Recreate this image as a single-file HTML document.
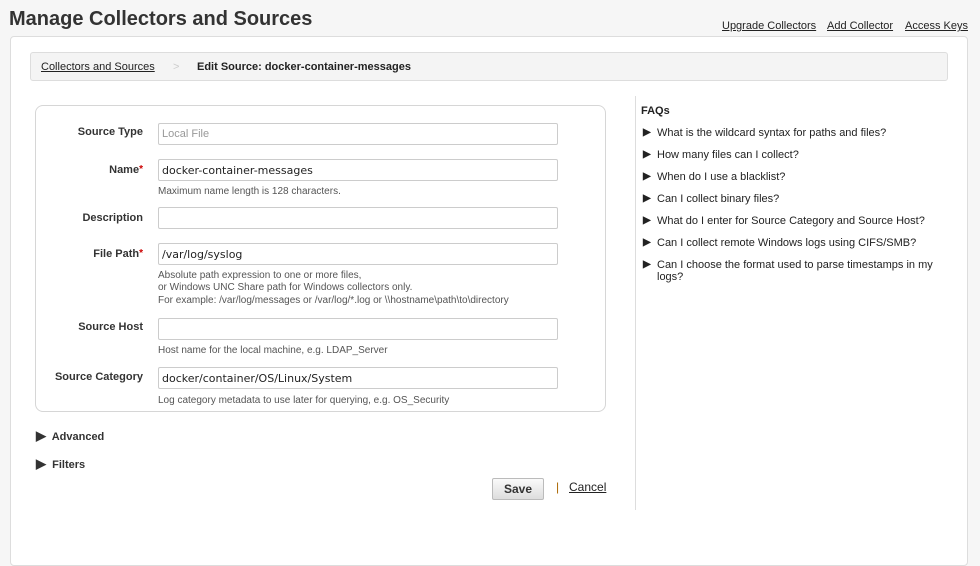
<!DOCTYPE html>
<html><head><style>
*{margin:0;padding:0;box-sizing:border-box}
body{width:980px;height:551px;background:#f6f6f6;font-family:"Liberation Sans",sans-serif;color:#222;position:relative;overflow:hidden}
.a{position:absolute}
h1{position:absolute;left:9px;top:8px;font-size:20px;font-weight:bold;color:#333}
.top a{color:#222;font-size:11px;text-decoration:underline}
.panel{left:10px;top:36px;width:958px;height:530px;background:#fff;border:1px solid #ddd;border-radius:4px}
.bc{left:30px;top:52px;width:918px;height:29px;background:#f4f4f4;border:1px solid #ddd;border-radius:3px;font-size:11px}
.form{left:35px;top:105px;width:571px;height:307px;border:1px solid #d6d6d6;border-radius:8px}
.lab{font-size:11px;font-weight:bold;color:#333;text-align:right;width:108px;left:35px}
.lab i{color:#c00;font-style:normal;font-size:10px;vertical-align:top}
.in{left:158px;width:400px;height:22px;border:1px solid #ccc;border-radius:2px;background:#fff;font-family:"DejaVu Sans",sans-serif;font-size:11px;padding:4px 3px;line-height:13px}
.h{left:158px;font-size:10px;color:#555;line-height:11.5px}
.faq{left:657px;font-size:11px;color:#222;width:290px;line-height:12px}
.faq b{position:absolute;left:-14px;top:0;font-size:10px}
</style></head><body>
<h1>Manage Collectors and Sources</h1>
<div class="a top" style="left:722px;top:16px"><a>Upgrade Collectors</a></div>
<div class="a top" style="left:827px;top:16px"><a>Add Collector</a></div>
<div class="a top" style="left:905px;top:16px"><a>Access Keys</a></div>
<div class="a panel"></div>
<div class="a bc"><span class="a" style="left:10px;top:8px;text-decoration:underline;color:#222">Collectors and Sources</span><span class="a" style="left:142px;top:8px;color:#ccc">&gt;</span><span class="a" style="left:166px;top:8px;font-weight:bold">Edit Source: docker-container-messages</span></div>
<div class="a form"></div>
<div class="a lab" style="top:126px">Source Type</div>
<div class="a in" style="top:123px;color:#999;font-family:'Liberation Sans',sans-serif">Local File</div>
<div class="a lab" style="top:164px">Name<i>*</i></div>
<div class="a in" style="top:159px">docker-container-messages</div>
<div class="a h" style="top:186px">Maximum name length is 128 characters.</div>
<div class="a lab" style="top:212px">Description</div>
<div class="a in" style="top:207px">&nbsp;</div>
<div class="a lab" style="top:248px">File Path<i>*</i></div>
<div class="a in" style="top:243px">/var/log/syslog</div>
<div class="a h" style="top:270px">Absolute path expression to one or more files,<br>or Windows UNC Share path for Windows collectors only.</div>
<div class="a h" style="top:295px">For example: /var/log/messages or /var/log/*.log or \\hostname\path\to\directory</div>
<div class="a lab" style="top:321px">Source Host</div>
<div class="a in" style="top:318px">&nbsp;</div>
<div class="a h" style="top:345px">Host name for the local machine, e.g. LDAP_Server</div>
<div class="a lab" style="top:371px">Source Category</div>
<div class="a in" style="top:367px">docker/container/OS/Linux/System</div>
<div class="a h" style="top:395px">Log category metadata to use later for querying, e.g. OS_Security</div>
<div class="a" style="left:36px;top:428px;font-size:11px;font-weight:bold;color:#333"><span style="font-size:13px">&#9654;</span>&nbsp; Advanced</div>
<div class="a" style="left:36px;top:456px;font-size:11px;font-weight:bold;color:#333"><span style="font-size:13px">&#9654;</span>&nbsp; Filters</div>
<div class="a" style="left:492px;top:478px;width:52px;height:22px;border:1px solid #bbb;border-radius:2px;background:linear-gradient(#fafafa,#ddd);font-size:12px;font-weight:bold;text-align:center;line-height:20px;color:#333">Save</div>
<div class="a" style="left:556px;top:480px;font-size:12px;color:#a60">|</div>
<div class="a" style="left:569px;top:480px;font-size:12px;text-decoration:underline">Cancel</div>
<div class="a" style="left:635px;top:96px;width:1px;height:414px;background:#ddd"></div>
<div class="a faq" style="top:105px;font-weight:bold;left:641px">FAQs</div>
<div class="a faq" style="top:127px"><b>&#9654;</b>What is the wildcard syntax for paths and files?</div>
<div class="a faq" style="top:149px"><b>&#9654;</b>How many files can I collect?</div>
<div class="a faq" style="top:171px"><b>&#9654;</b>When do I use a blacklist?</div>
<div class="a faq" style="top:193px"><b>&#9654;</b>Can I collect binary files?</div>
<div class="a faq" style="top:215px"><b>&#9654;</b>What do I enter for Source Category and Source Host?</div>
<div class="a faq" style="top:237px"><b>&#9654;</b>Can I collect remote Windows logs using CIFS/SMB?</div>
<div class="a faq" style="top:259px"><b>&#9654;</b>Can I choose the format used to parse timestamps in my<br>logs?</div>
</body></html>
